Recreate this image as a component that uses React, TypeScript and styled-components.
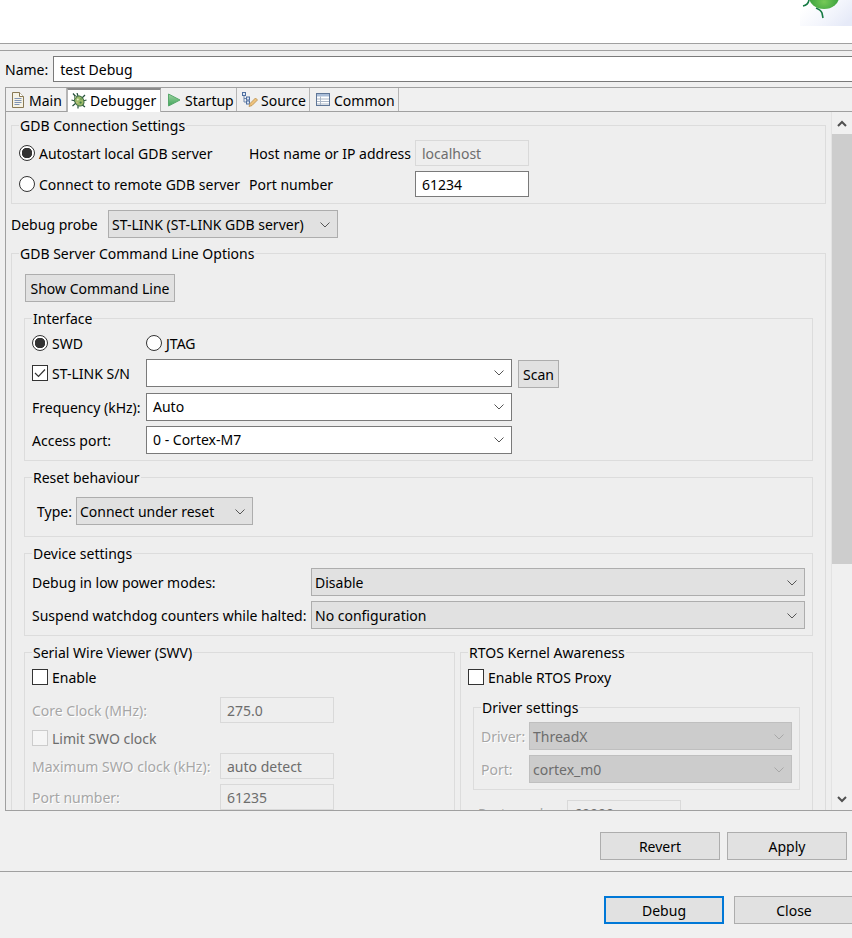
import React from 'react';
import styled, { createGlobalStyle } from 'styled-components';

const GlobalStyle = createGlobalStyle`
  html, body {
    margin: 0;
    padding: 0;
    background: #f0f0f0;
    overflow: hidden;
  }
  * {
    box-sizing: border-box;
  }
`;

const Chevron: React.FC<{ color?: string }> = ({ color = '#555' }) => (
  <svg width="10" height="6" viewBox="0 0 10 6" fill="none">
    <path d="M0.5 0.5 L5 5 L9.5 0.5" stroke={color} strokeWidth="1" />
  </svg>
);

const DocIcon = () => (
  <svg width="16" height="16" viewBox="0 0 16 16">
    <path d="M2.5 0.5 H9.5 L13.5 4.5 V15.5 H2.5 Z" fill="#f6f3e6" stroke="#8a7a55" />
    <path d="M9.5 0.5 V4.5 H13.5" fill="#fff" stroke="#8a7a55" />
    <path d="M4.5 6.5 H11.5 M4.5 8.5 H11.5 M4.5 10.5 H11.5 M4.5 12.5 H9.5" stroke="#7f93b5" />
  </svg>
);

const BugIcon = () => (
  <svg width="16" height="16" viewBox="0 0 16 16" fill="none">
    <path d="M2 0.5 L5 4 M6 0 L7 3 M14 2 L11 5 M0.5 7 L4 8 M15.5 7 L12 8 M1.5 13 L5 10 M14 14 L10 11 M7 15.5 L7 13" stroke="#24503a" strokeWidth="1.2" />
    <ellipse cx="8.3" cy="8" rx="4.4" ry="5.4" transform="rotate(-35 8.3 8)" fill="#9dbb6a" stroke="#3b6a42" />
    <circle cx="6.8" cy="6.5" r="1" fill="#e3edc4" />
    <circle cx="9.6" cy="9.6" r="1.1" fill="#3f7d45" />
    <circle cx="6" cy="9.6" r="0.8" fill="#c9b98a" />
    <circle cx="10" cy="6" r="0.8" fill="#4f8a4c" />
    <circle cx="4.6" cy="4" r="1.2" fill="#bcc8a0" stroke="#2e5d3c" strokeWidth="0.6" />
  </svg>
);

const PlayIcon = () => (
  <svg width="16" height="16" viewBox="0 0 16 16">
    <defs>
      <linearGradient id="playFill" x1="0" y1="0" x2="0" y2="1">
        <stop offset="0" stopColor="#9ed4a0" />
        <stop offset="1" stopColor="#3fa45a" />
      </linearGradient>
    </defs>
    <path d="M2.5 2 L14 8 L2.5 14 Z" fill="url(#playFill)" stroke="#58a86c" strokeWidth="1" />
  </svg>
);

const SourceIcon = () => (
  <svg width="16" height="16" viewBox="0 0 16 16" fill="none">
    <path d="M2 3 V10 H5 M2 6.5 H5" stroke="#6d86ad" />
    <rect x="0.5" y="0.5" width="3" height="3" fill="#dfe8f5" stroke="#4f6f9f" />
    <rect x="4.5" y="5" width="3" height="3" fill="#dfe8f5" stroke="#4f6f9f" />
    <rect x="4.5" y="9" width="3" height="3" fill="#dfe8f5" stroke="#4f6f9f" />
    <path d="M7 14.5 L8 11.5 L13.5 6 L15.5 8 L10 13.5 Z" fill="#eec27c" stroke="#b98f4e" strokeWidth="0.8" />
  </svg>
);

const TableIcon = () => (
  <svg width="16" height="16" viewBox="0 0 16 16">
    <rect x="1.5" y="1.5" width="13" height="12" fill="#fff" stroke="#5f7697" />
    <rect x="2" y="2" width="12" height="2.5" fill="#a9bdd8" />
    <path d="M2 7 H14 M2 9.5 H14 M2 12 H14 M5.5 4.5 V13" stroke="#aab6c6" />
  </svg>
);

const Logo = () => (
  <svg width="52" height="26" viewBox="0 0 52 26">
    <defs>
      <linearGradient id="logoBack" x1="0" y1="0.2" x2="1" y2="0.7">
        <stop offset="0.1" stopColor="#ffffff" />
        <stop offset="0.6" stopColor="#f3f5fc" />
        <stop offset="1" stopColor="#e6eaf8" />
      </linearGradient>
      <radialGradient id="logoBody" cx="0.5" cy="0.7" r="0.6">
        <stop offset="0" stopColor="#76c956" />
        <stop offset="1" stopColor="#2f9a3a" />
      </radialGradient>
    </defs>
    <rect width="52" height="26" fill="url(#logoBack)" />
    <path d="M9 0 Q8 5 3 6 M16 8 Q21 10 22 13 L23 18" fill="none" stroke="#167a44" strokeWidth="1.6" />
    <ellipse cx="24" cy="-3" rx="15" ry="12" fill="url(#logoBody)" />
  </svg>
);

const TABS = [
  { label: 'Main', width: 61, pad: 4, icon: <DocIcon /> },
  { label: 'Debugger', width: 94, pad: 3, icon: <BugIcon />, active: true },
  { label: 'Startup', width: 76, pad: 5, icon: <PlayIcon /> },
  { label: 'Source', width: 73, pad: 5, icon: <SourceIcon /> },
  { label: 'Common', width: 89, pad: 5, icon: <TableIcon /> },
];

const App: React.FC = () => (
  <S.Page>
    <GlobalStyle />
    <S.Header>
      <S.LogoSlot>
        <Logo />
      </S.LogoSlot>
    </S.Header>
    <S.HeaderGap />
    <S.NameRow>
      <S.Label>Name:</S.Label>
      <S.NameInput>test Debug</S.NameInput>
    </S.NameRow>
    <S.Folder>
      <S.TabStrip>
        {TABS.map((tab) => (
          <S.Tab key={tab.label} $width={tab.width} $pad={tab.pad} $active={!!tab.active}>
            {tab.icon}
            <span>{tab.label}</span>
          </S.Tab>
        ))}
      </S.TabStrip>
      <S.FolderBody>
        <S.Content>
          <S.Group>
            <S.Legend $offset={0}>GDB Connection Settings</S.Legend>
            <S.ConnectionGrid>
              <S.OptionRow>
                <S.Radio $checked />
                <S.Label>Autostart local GDB server</S.Label>
              </S.OptionRow>
              <S.Label>Host name or IP address</S.Label>
              <S.TextBox $disabled>localhost</S.TextBox>
              <S.OptionRow>
                <S.Radio />
                <S.Label>Connect to remote GDB server</S.Label>
              </S.OptionRow>
              <S.Label>Port number</S.Label>
              <S.TextBox>61234</S.TextBox>
            </S.ConnectionGrid>
          </S.Group>

          <S.ProbeRow>
            <S.Label>Debug probe</S.Label>
            <S.Select $width={230}>
              ST-LINK (ST-LINK GDB server)
              <Chevron />
            </S.Select>
          </S.ProbeRow>

          <S.ServerGroup>
            <S.Legend $offset={-5}>GDB Server Command Line Options</S.Legend>
            <S.CommandButton>Show Command Line</S.CommandButton>

            <S.InnerGroup>
              <S.Legend>Interface</S.Legend>
              <S.InterfaceBody>
                <S.InterfaceRow $height={20} $mb={5}>
                  <S.OptionRow>
                    <S.Radio $checked />
                    <S.Label>SWD</S.Label>
                  </S.OptionRow>
                  <S.OptionRow>
                    <S.Radio />
                    <S.Label>JTAG</S.Label>
                  </S.OptionRow>
                </S.InterfaceRow>
                <S.InterfaceRow $height={28} $mb={7}>
                  <S.OptionRow>
                    <S.Check $checked>
                      <svg width="12" height="10" viewBox="0 0 12 10" fill="none">
                        <path d="M1 5 L4.5 8.5 L11 1.5" stroke="#333" strokeWidth="1.2" />
                      </svg>
                    </S.Check>
                    <S.Label>ST-LINK S/N</S.Label>
                  </S.OptionRow>
                  <S.Select $white $width={366}>
                    <span />
                    <Chevron />
                  </S.Select>
                  <S.ScanButton>Scan</S.ScanButton>
                </S.InterfaceRow>
                <S.InterfaceRow $height={28} $mb={5}>
                  <S.Label>Frequency (kHz):</S.Label>
                  <S.Select $white $width={366}>
                    Auto
                    <Chevron />
                  </S.Select>
                </S.InterfaceRow>
                <S.InterfaceRow $height={28} $mb={0}>
                  <S.Label>Access port:</S.Label>
                  <S.Select $white $width={366}>
                    0 - Cortex-M7
                    <Chevron />
                  </S.Select>
                </S.InterfaceRow>
              </S.InterfaceBody>
            </S.InnerGroup>

            <S.InnerGroup>
              <S.Legend>Reset behaviour</S.Legend>
              <S.ResetBody>
                <S.Label>Type:</S.Label>
                <S.Select $width={177}>
                  Connect under reset
                  <Chevron />
                </S.Select>
              </S.ResetBody>
            </S.InnerGroup>

            <S.InnerGroup>
              <S.Legend>Device settings</S.Legend>
              <S.DeviceBody>
                <S.Label>Debug in low power modes:</S.Label>
                <S.Select>
                  Disable
                  <Chevron />
                </S.Select>
                <S.Label>Suspend watchdog counters while halted:</S.Label>
                <S.Select>
                  No configuration
                  <Chevron />
                </S.Select>
              </S.DeviceBody>
            </S.InnerGroup>

            <S.BottomColumns>
              <S.ColumnGroup>
                <S.Legend>Serial Wire Viewer (SWV)</S.Legend>
                <S.SwvBody>
                  <S.OptionRow>
                    <S.Check />
                    <S.Label>Enable</S.Label>
                  </S.OptionRow>
                  <S.SwvField $mt={10}>
                    <S.DisabledLabel>Core Clock (MHz):</S.DisabledLabel>
                    <S.TextBox $disabled>275.0</S.TextBox>
                  </S.SwvField>
                  <S.LimitRow>
                    <S.Check $disabled />
                    <S.DimLabel>Limit SWO clock</S.DimLabel>
                  </S.LimitRow>
                  <S.SwvField $mt={5}>
                    <S.DisabledLabel>Maximum SWO clock (kHz):</S.DisabledLabel>
                    <S.TextBox $disabled>auto detect</S.TextBox>
                  </S.SwvField>
                  <S.SwvField $mt={5}>
                    <S.DisabledLabel>Port number:</S.DisabledLabel>
                    <S.TextBox $disabled>61235</S.TextBox>
                  </S.SwvField>
                </S.SwvBody>
              </S.ColumnGroup>

              <S.RtosGroup>
                <S.Legend>RTOS Kernel Awareness</S.Legend>
                <S.RtosBody>
                  <S.OptionRow>
                    <S.Check />
                    <S.Label>Enable RTOS Proxy</S.Label>
                  </S.OptionRow>
                  <S.DriverGroup>
                    <S.Legend>Driver settings</S.Legend>
                    <S.DriverBody>
                      <S.DisabledLabel>Driver:</S.DisabledLabel>
                      <S.Select $off>
                        ThreadX
                        <Chevron color="#a8a8a8" />
                      </S.Select>
                      <S.DisabledLabel>Port:</S.DisabledLabel>
                      <S.Select $off>
                        cortex_m0
                        <Chevron color="#a8a8a8" />
                      </S.Select>
                    </S.DriverBody>
                  </S.DriverGroup>
                  <S.RtosPort>
                    <S.DisabledLabel>Port number:</S.DisabledLabel>
                    <S.TextBox $disabled>60000</S.TextBox>
                  </S.RtosPort>
                </S.RtosBody>
              </S.RtosGroup>
            </S.BottomColumns>
          </S.ServerGroup>
        </S.Content>
        <S.ScrollBar>
          <S.ScrollArrow>
            <svg width="10" height="7" viewBox="0 0 10 7" fill="none">
              <path d="M1 6 L5 2 L9 6" stroke="#505050" strokeWidth="2" />
            </svg>
          </S.ScrollArrow>
          <S.ScrollThumb />
          <S.ScrollTrack />
          <S.ScrollArrow>
            <svg width="10" height="7" viewBox="0 0 10 7" fill="none">
              <path d="M1 1 L5 5 L9 1" stroke="#505050" strokeWidth="2" />
            </svg>
          </S.ScrollArrow>
        </S.ScrollBar>
      </S.FolderBody>
    </S.Folder>
    <S.ApplyBar>
      <S.DialogButton>Revert</S.DialogButton>
      <S.DialogButton>Apply</S.DialogButton>
    </S.ApplyBar>
    <S.DialogBar>
      <S.DialogButton $primary>Debug</S.DialogButton>
      <S.DialogButton>Close</S.DialogButton>
    </S.DialogBar>
  </S.Page>
);

const S = {
  Page: styled.div`
    width: 852px;
    height: 938px;
    overflow: hidden;
    display: flex;
    flex-direction: column;
    background: #f0f0f0;
    color: #000;
    font-family: 'Noto Sans', 'Open Sans', sans-serif;
    font-size: 14px;
    line-height: 20px;
  `,
  Header: styled.header`
    height: 44px;
    flex: none;
    background: #fff;
    border-bottom: 1px solid #a0a0a0;
    display: flex;
    justify-content: flex-end;
    align-items: flex-start;
  `,
  LogoSlot: styled.div`
    width: 52px;
    height: 26px;
  `,
  HeaderGap: styled.div`
    height: 7px;
    flex: none;
    border-bottom: 1px solid #a0a0a0;
  `,
  NameRow: styled.div`
    flex: none;
    display: flex;
    align-items: center;
    gap: 5px;
    padding: 5px 0 0 5px;
  `,
  Label: styled.span`
    padding-top: 2px;
    white-space: nowrap;
  `,
  DisabledLabel: styled.span`
    padding-top: 2px;
    white-space: nowrap;
    color: #a6a6a6;
    text-shadow: 1px 1px 0 #fff;
  `,
  DimLabel: styled.span`
    padding-top: 2px;
    white-space: nowrap;
    color: #6d6d6d;
  `,
  NameInput: styled.div`
    flex: 1;
    height: 26px;
    margin-right: -6px;
    padding: 3px 6px 0;
    background: #fff;
    border: 1px solid #7a7a7a;
  `,
  Folder: styled.div`
    flex: none;
    height: 724px;
    margin: 5px 0 0 5px;
    display: flex;
    flex-direction: column;
    border: 1px solid #a0a0a0;
    border-right: none;
  `,
  TabStrip: styled.div`
    flex: none;
    height: 24px;
    display: flex;
    border-bottom: 1px solid #a0a0a0;
  `,
  Tab: styled.div<{ $width: number; $pad: number; $active: boolean }>`
    width: ${(p) => p.$width}px;
    height: ${(p) => (p.$active ? 24 : 23)}px;
    display: flex;
    align-items: center;
    gap: 3px;
    padding-left: ${(p) => p.$pad}px;
    white-space: nowrap;
    background: ${(p) => (p.$active ? '#fff' : 'transparent')};
    border-right: 1px solid #b5b5b5;
    border-top: ${(p) => (p.$active ? '2px solid #8a8a8a' : 'none')};
    border-left: ${(p) => (p.$active ? '1px solid #b5b5b5' : 'none')};
    svg {
      flex: none;
    }
    span {
      padding: ${(p) => (p.$active ? '0 0 1px' : '2px 0 0')};
    }
  `,
  FolderBody: styled.div`
    flex: 1;
    min-height: 0;
    display: flex;
    background: #eeeeee;
  `,
  Content: styled.div`
    flex: none;
    width: 825px;
    padding: 3px 5px 0 5px;
    overflow: hidden;
  `,
  Group: styled.fieldset`
    margin: 0;
    padding: 0 7px 6px 7px;
    min-width: 0;
    border: 1px solid #dcdcdc;
  `,
  Legend: styled.legend<{ $offset?: number }>`
    margin-left: ${(p) => p.$offset ?? 7}px;
    padding: 0 1px;
    height: 20px;
    line-height: 22px;
    white-space: nowrap;
  `,
  ConnectionGrid: styled.div`
    display: grid;
    grid-template-columns: 230px 166px 114px;
    grid-auto-rows: 26px;
    row-gap: 5px;
    align-items: center;
    padding-top: 5px;
  `,
  OptionRow: styled.div`
    height: 20px;
    display: flex;
    align-items: center;
    gap: 4px;
  `,
  Radio: styled.span<{ $checked?: boolean }>`
    flex: none;
    width: 16px;
    height: 16px;
    border-radius: 50%;
    border: 1px solid #333;
    background: ${(p) => (p.$checked ? 'radial-gradient(circle, #333 0 5px, #fff 5.5px)' : '#fff')};
  `,
  Check: styled.span<{ $checked?: boolean; $disabled?: boolean }>`
    flex: none;
    width: 16px;
    height: 16px;
    display: flex;
    align-items: center;
    justify-content: center;
    background: ${(p) => (p.$disabled ? '#f5f5f5' : '#fff')};
    border: 1px solid ${(p) => (p.$disabled ? '#cccccc' : '#333')};
  `,
  TextBox: styled.div<{ $disabled?: boolean }>`
    width: 114px;
    height: 26px;
    padding: 3px 6px 0;
    white-space: nowrap;
    color: ${(p) => (p.$disabled ? '#6d6d6d' : '#000')};
    background: ${(p) => (p.$disabled ? '#eeeeee' : '#fff')};
    border: 1px solid ${(p) => (p.$disabled ? '#d9d9d9' : '#7a7a7a')};
  `,
  ProbeRow: styled.div`
    display: flex;
    align-items: center;
    margin-top: 6px;
    & > span {
      width: 97px;
    }
  `,
  Select: styled.div<{ $width?: number; $white?: boolean; $off?: boolean }>`
    width: ${(p) => (p.$width ? `${p.$width}px` : 'auto')};
    height: 28px;
    display: flex;
    align-items: center;
    justify-content: space-between;
    padding: ${(p) => (p.$white ? 0 : 2)}px 7px 0 ${(p) => (p.$white ? 6 : 3)}px;
    white-space: nowrap;
    color: ${(p) => (p.$off ? '#6d6d6d' : '#000')};
    background: ${(p) => (p.$white ? '#fff' : p.$off ? '#cccccc' : '#e1e1e1')};
    border: 1px solid ${(p) => (p.$white ? '#7a7a7a' : p.$off ? '#bfbfbf' : '#adadad')};
  `,
  ServerGroup: styled.fieldset`
    margin: 5px 0 0 0;
    padding: 0 12px 0 12px;
    min-width: 0;
    border: 1px solid #dcdcdc;
  `,
  CommandButton: styled.div`
    width: 150px;
    height: 28px;
    margin: 11px 0 0 1px;
    padding-top: 2px;
    display: flex;
    align-items: center;
    justify-content: center;
    white-space: nowrap;
    background: #e1e1e1;
    border: 1px solid #adadad;
  `,
  InnerGroup: styled.fieldset`
    margin: 6px 0 0 0;
    padding: 0;
    min-width: 0;
    border: 1px solid #dcdcdc;
  `,
  InterfaceBody: styled.div`
    padding: 5px 7px 6px 7px;
  `,
  InterfaceRow: styled.div<{ $height: number; $mb: number }>`
    height: ${(p) => p.$height}px;
    margin-bottom: ${(p) => p.$mb}px;
    display: grid;
    grid-template-columns: 114px 372px 41px;
    align-items: center;
  `,
  ScanButton: styled.div`
    width: 41px;
    height: 28px;
    margin-top: 2px;
    padding-top: 2px;
    display: flex;
    align-items: center;
    justify-content: center;
    background: #e1e1e1;
    border: 1px solid #adadad;
  `,
  ResetBody: styled.div`
    display: flex;
    align-items: center;
    padding: 10px 0 11px 12px;
    & > span {
      width: 39px;
    }
  `,
  DeviceBody: styled.div`
    display: grid;
    grid-template-columns: 279px 494px;
    grid-auto-rows: 28px;
    row-gap: 5px;
    align-items: center;
    padding: 5px 0 6px 7px;
  `,
  BottomColumns: styled.div`
    display: flex;
    gap: 5px;
  `,
  ColumnGroup: styled.fieldset`
    flex: none;
    width: 431px;
    margin: 6px 0 0 0;
    padding: 0;
    min-width: 0;
    border: 1px solid #dcdcdc;
  `,
  RtosGroup: styled.fieldset`
    flex: none;
    width: 353px;
    margin: 6px 0 0 0;
    padding: 0;
    min-width: 0;
    border: 1px solid #dcdcdc;
  `,
  SwvBody: styled.div`
    padding: 5px 7px;
  `,
  SwvField: styled.div<{ $mt: number }>`
    display: grid;
    grid-template-columns: 188px 114px;
    align-items: center;
    margin-top: ${(p) => p.$mt}px;
  `,
  LimitRow: styled.div`
    height: 20px;
    margin-top: 5px;
    display: flex;
    align-items: center;
    gap: 4px;
  `,
  RtosBody: styled.div`
    padding: 5px 7px;
  `,
  DriverGroup: styled.fieldset`
    width: 327px;
    margin: 10px 0 0 5px;
    padding: 0;
    min-width: 0;
    border: 1px solid #dcdcdc;
  `,
  DriverBody: styled.div`
    display: grid;
    grid-template-columns: 48px 263px;
    grid-auto-rows: 28px;
    row-gap: 5px;
    align-items: center;
    padding: 5px 0 6px 7px;
  `,
  RtosPort: styled.div`
    display: grid;
    grid-template-columns: 89px 114px;
    align-items: center;
    margin: 10px 0 0 10px;
  `,
  ScrollBar: styled.div`
    flex: none;
    width: 21px;
    display: flex;
    flex-direction: column;
    background: #f0f0f0;
    border-left: 1px solid #e3e3e3;
  `,
  ScrollArrow: styled.div`
    flex: none;
    height: 22px;
    display: flex;
    align-items: center;
    justify-content: center;
  `,
  ScrollThumb: styled.div`
    flex: none;
    height: 430px;
    background: #cdcdcd;
  `,
  ScrollTrack: styled.div`
    flex: 1;
  `,
  ApplyBar: styled.div`
    flex: none;
    height: 61px;
    padding: 21px 5px 0 0;
    display: flex;
    justify-content: flex-end;
    gap: 7px;
    border-bottom: 1px solid #a0a0a0;
  `,
  DialogBar: styled.div`
    flex: none;
    padding: 24px 0 0 604px;
    display: flex;
    gap: 10px;
  `,
  DialogButton: styled.div<{ $primary?: boolean }>`
    flex: none;
    width: 120px;
    height: 28px;
    padding-top: ${(p) => (p.$primary ? 1 : 2)}px;
    display: flex;
    align-items: center;
    justify-content: center;
    background: #e1e1e1;
    border: ${(p) => (p.$primary ? '2px solid #0078d7' : '1px solid #adadad')};
  `,
};

export default App;
